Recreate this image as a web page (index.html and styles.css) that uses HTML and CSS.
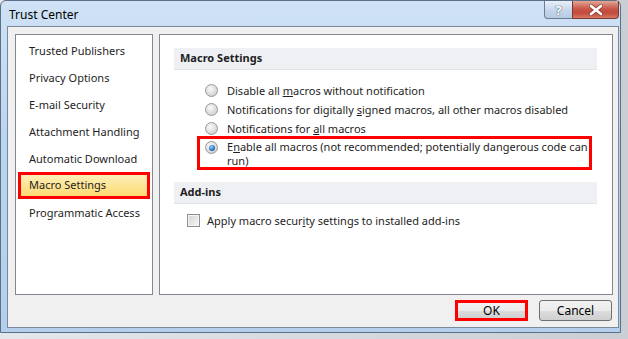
FILE: index.html
```html
<!DOCTYPE html>
<html>
<head>
<meta charset="utf-8">
<link rel="stylesheet" href="styles.css">
</head>
<body>
<div class="screen">
  <div class="window">
    <div class="titlebar">
      <span class="title">Trust Center</span>
      <div class="caption-buttons">
        <span class="cap-btn help">?</span>
        <span class="cap-btn close">
          <svg width="16" height="12" viewBox="0 0 16 12"><path d="M3 2 L13 10 M13 2 L3 10" stroke="#6a2f28" stroke-width="4.2" stroke-linecap="round" opacity="0.55"/><path d="M3 2 L13 10 M13 2 L3 10" stroke="#fff" stroke-width="2.6" stroke-linecap="round"/></svg>
        </span>
      </div>
    </div>
    <div class="dialog">
      <div class="panes">
        <ul class="nav">
          <li>Trusted Publishers</li>
          <li>Privacy Options</li>
          <li>E-mail Security</li>
          <li>Attachment Handling</li>
          <li>Automatic Download</li>
          <li class="active">Macro Settings</li>
          <li>Programmatic Access</li>
        </ul>
        <div class="content">
          <div class="section-head">Macro Settings</div>
          <div class="options">
            <label class="opt"><span class="radio"></span><span class="txt">Disable all <u>m</u>acros without notification</span></label>
            <label class="opt"><span class="radio"></span><span class="txt">Notifications for digitally <u>s</u>igned macros, all other macros disabled</span></label>
            <label class="opt"><span class="radio"></span><span class="txt">Notifications for <u>a</u>ll macros</span></label>
            <label class="opt marked"><span class="radio on"></span><span class="txt">E<u>n</u>able all macros (not recommended; potentially dangerous code can run)</span></label>
          </div>
          <div class="section-head addins">Add-ins</div>
          <label class="check-row"><span class="checkbox"></span><span class="txt">Apply macro secur<u>i</u>ty settings to installed add-ins</span></label>
        </div>
      </div>
      <div class="footer">
        <span class="btn ok">OK</span>
        <span class="btn">Cancel</span>
      </div>
    </div>
  </div>
</div>
</body>
</html>
```

FILE: styles.css
```css
html, body {
  margin: 0;
  padding: 0;
}
body {
  font-family: "Noto Sans", "Open Sans", sans-serif;
  font-size: 11px;
  color: #1e1e1e;
  background: #d9dde2;
}
.screen {
  width: 628px;
  height: 339px;
  background: linear-gradient(90deg, #e4e7eb, #c9ced5);
  overflow: hidden;
}
.window {
  width: 621px;
  height: 333px;
  box-sizing: border-box;
  background: linear-gradient(180deg, #cfe2f6 0%, #bcd5ef 40%, #b3cfec 100%);
  border: 1px solid #5c6f86;
  border-radius: 6px 6px 0 0;
  padding: 0 1px 4px 6px;
  display: flex;
  flex-direction: column;
}
.titlebar {
  height: 26px;
  display: flex;
  align-items: flex-start;
  justify-content: space-between;
}
.title {
  font-size: 12px;
  color: #000;
  margin-top: 5px;
  margin-left: 2px;
}
.caption-buttons {
  display: flex;
  margin-right: 0;
}
.cap-btn {
  height: 18px;
  box-sizing: border-box;
  border: 1px solid #6b7d93;
  border-top: none;
  display: flex;
  align-items: center;
  justify-content: center;
}
.help {
  width: 28px;
  border-radius: 0 0 0 4px;
  background: linear-gradient(180deg, #e8f0f9, #c5d6ea 55%, #b6cbe3);
  color: #fff;
  font-size: 13px;
  font-weight: bold;
  text-shadow: 0 0 1px #3c4f66, 0 0 1px #3c4f66;
  border-right: none;
}
.close {
  width: 47px;
  border-radius: 0 0 4px 0;
  background: linear-gradient(180deg, #e2a796, #c9584a 45%, #c14a3c 70%, #d77a64);
  border-color: #7d3a33;
}
.dialog {
  flex: 1;
  background: #f0f0f0;
  border: 1px solid #7b8a9b;
  padding: 7px 5px 6px 7px;
  display: flex;
  flex-direction: column;
}
.panes {
  display: flex;
  gap: 6px;
  height: 261px;
}
.nav {
  list-style: none;
  margin: 0;
  padding: 4px 2px 0 1px;
  width: 138px;
  box-sizing: border-box;
  background: #fff;
  border: 1px solid #828790;
  display: flex;
  flex-direction: column;
  gap: 3px;
}
.nav li {
  height: 24px;
  line-height: 24px;
  padding-left: 12px;
}
.nav li.active {
  margin-left: 1px;
  background: linear-gradient(180deg, #fef1c2 0%, #fde69a 45%, #fbd867 100%);
  box-shadow: inset 0 0 0 3px #f00;
  line-height: 26px;
  height: 27px;
  margin-top: -2px;
  margin-bottom: -1px;
  padding-left: 11px;
}
.content {
  flex: 1;
  background: #fff;
  border: 1px solid #828790;
  padding: 13px 15px 0 14px;
}
.section-head {
  height: 21px;
  line-height: 20px;
  background: #eef0f4;
  border-bottom: 1px solid #dfe3ea;
  padding-left: 6px;
  font-weight: bold;
  color: #1e1e1e;
}
.options {
  padding: 11px 0 0 31px;
  display: flex;
  flex-direction: column;
}
.opt {
  display: flex;
  align-items: center;
  height: 19px;
  line-height: 14px;
}
.opt .txt {
  margin-left: 9px;
  max-width: 366px;
}
.opt.marked {
  align-items: flex-start;
  height: auto;
  line-height: 13.5px;
  outline: 3px solid #f00;
  outline-offset: 0;
  margin-left: -5px;
  padding-left: 5px;
  margin-right: 8px;
  margin-top: 1px;
  padding-top: 1px;
}
.opt.marked .radio { margin-top: 1px; }
.radio {
  width: 13px;
  height: 13px;
  flex: none;
  box-sizing: border-box;
  border-radius: 50%;
  border: 1px solid #989898;
  background: radial-gradient(circle at 40% 35%, #fafafa 0%, #e2e2e2 45%, #c4c4c4 100%);
  display: flex;
  align-items: center;
  justify-content: center;
}
.radio.on::after {
  content: "";
  width: 6px;
  height: 6px;
  border-radius: 50%;
  background: radial-gradient(circle at 40% 35%, #9fd4f6 0%, #2f7fc8 50%, #0f3f78 100%);
}
.section-head.addins {
  margin-top: 15px;
}
.check-row {
  display: flex;
  align-items: center;
  margin-top: 9px;
  margin-left: 13px;
}
.checkbox {
  width: 13px;
  height: 13px;
  box-sizing: border-box;
  border: 1px solid #8e8f8f;
  background: linear-gradient(135deg, #d4d4d4, #f6f6f6);
  box-shadow: inset 0 0 0 1px #f4f4f4;
  flex: none;
}
.check-row .txt {
  margin-left: 7px;
}
.footer {
  display: flex;
  justify-content: flex-end;
  gap: 11px;
  margin-top: 5px;
  padding-right: 1px;
}
.btn {
  width: 73px;
  height: 21px;
  box-sizing: border-box;
  border: 1px solid #707070;
  border-radius: 3px;
  background: linear-gradient(180deg, #f2f2f2 0%, #ebebeb 50%, #dddddd 51%, #cfcfcf 100%);
  display: flex;
  align-items: center;
  justify-content: center;
  font-size: 12px;
  color: #000;
}
.btn.ok {
  border: 3px solid #f00;
  border-radius: 0;
}
```
